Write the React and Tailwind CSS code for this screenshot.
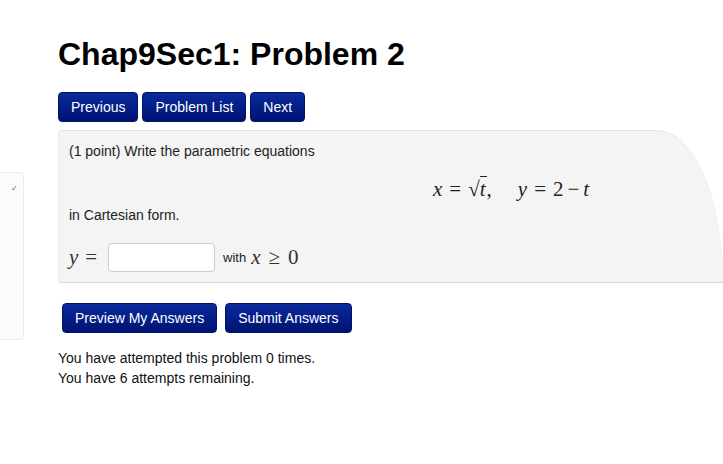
const sans = { fontFamily: '"Liberation Sans", Arial, sans-serif' };
const serif = { fontFamily: '"Liberation Serif", "DejaVu Serif", serif' };

function Mi({ children }) {
  return <span className="italic">{children}</span>;
}

function BlueButton({ children }) {
  return (
    <button className="h-[30px] px-[12px] rounded-[4px] border border-[#001466] bg-gradient-to-b from-[#0b2a9c] to-[#001373] text-white text-[14px] leading-none">
      {children}
    </button>
  );
}

export default function App() {
  return (
    <div className="relative w-[723px] h-[464px] overflow-hidden bg-white text-black" style={sans}>
      {/* faint side panel on the left */}
      <div className="absolute left-[-50px] top-[172px] w-[74px] h-[168px] rounded-tl-[68px_175px] rounded-bl-[50px_120px] rounded-r-[8px] border border-[#ececec] bg-[#fbfbfb]">
        <span className="absolute left-[60px] top-[12px] text-[8px] text-[#3f63a8] leading-none">✓</span>
      </div>

      <div className="pl-[58px] pt-[35px]">
        <h1 className="text-[32px] font-bold leading-[38px]">Chap9Sec1: Problem 2</h1>

        <div className="flex gap-[4px] mt-[19px]">
          <BlueButton>Previous</BlueButton>
          <BlueButton>Problem List</BlueButton>
          <BlueButton>Next</BlueButton>
        </div>

        {/* problem body */}
        <div className="mt-[8px] w-[665px] h-[153px] bg-[#f4f4f4] border-t border-b border-l border-t-[#e4e4e4] border-b-[#d9d9d9] border-l-[#e8e8e8] rounded-tr-[66px_150px] rounded-bl-[3px] rounded-tl-[3px] pl-[10px] pt-[11px] text-[14px] text-[#222]">
          <p className="leading-[18px]">(1 point) Write the parametric equations</p>

          <div className="flex h-[46px] items-center pl-[364px] pt-[14px]" style={serif}>
            <span className="text-[21px] text-[#222] whitespace-nowrap">
              <Mi>x</Mi>
              <span className="mx-[7px]">=</span>
              <span>√</span>
              <span className="border-t border-[#222] pr-[1px]"><Mi>t</Mi></span>
              <span>,</span>
              <span className="inline-block w-[26px]" />
              <Mi>y</Mi>
              <span className="mx-[7px]">=</span>
              <span>2</span>
              <span className="mx-[4px]">−</span>
              <Mi>t</Mi>
            </span>
          </div>

          <p className="leading-[18px]">in Cartesian form.</p>

          <div className="flex items-center mt-[18px]">
            <span className="text-[21px] text-[#333] w-[39px] whitespace-nowrap" style={serif}>
              <Mi>y</Mi><span className="ml-[7px]">=</span>
            </span>
            <input className="w-[107px] h-[29px] rounded-[4px] border border-[#cccccc] bg-white" />
            <span className="ml-[8px] text-[13px]">with</span>
            <span className="ml-[5px] text-[21px] text-[#333] whitespace-nowrap" style={serif}>
              <Mi>x</Mi>
              <span className="mx-[8px]">≥</span>
              <span>0</span>
            </span>
          </div>
        </div>

        <div className="flex gap-[8px] mt-[20px] ml-[4px]">
          <BlueButton>Preview My Answers</BlueButton>
          <BlueButton>Submit Answers</BlueButton>
        </div>

        <div className="mt-[15px] text-[14px] leading-[20px] text-[#111]">
          <p>You have attempted this problem 0 times.</p>
          <p>You have 6 attempts remaining.</p>
        </div>
      </div>
    </div>
  );
}
